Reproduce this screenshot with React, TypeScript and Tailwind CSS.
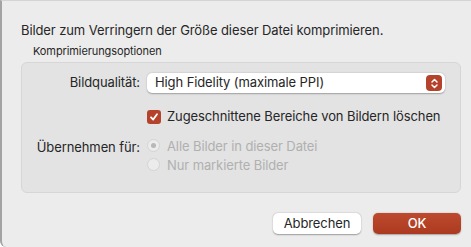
import React from "react";

export default function App() {
  return (
    <div
      className="w-[471px] h-[247px] bg-[#ececec] border-l-2 border-l-[#a3a3a3] border-t border-t-[#d4d4d4] rounded-bl-[6px] text-[#222] overflow-hidden tracking-[-0.1px]"
      style={{ fontFamily: "Inter, 'Noto Sans', sans-serif" }}
    >
      <div className="pl-[19px] pr-[10px]">
        <div className="pt-[21px] text-[13px] leading-[16px] text-[#262626]">
          Bilder zum Verringern der Größe dieser Datei komprimieren.
        </div>
        <div className="pl-[12px] mt-[6px] text-[11px] leading-[14px] text-[#262626]">
          Komprimierungsoptionen
        </div>
        <div className="mt-[4px] w-[440px] h-[131px] rounded-[6px] bg-[#e3e3e3] border border-[#d6d6d6] pt-[10px]">
          <div className="flex items-center">
            <div className="w-[118px] text-right text-[13px] text-[#262626]">Bildqualität:</div>
            <div className="ml-[7px] w-[298px] h-[20px] bg-white rounded-[5px] shadow-[0_0.5px_1.5px_rgba(0,0,0,0.3)] flex items-center pl-[8px] pr-[3px]">
              <span className="flex-1 text-[13px] text-[#262626]">High Fidelity (maximale PPI)</span>
              <div className="w-[16px] h-[16px] rounded-[4px] bg-[#b5432b] flex items-center justify-center">
                <svg width="9" height="11" viewBox="0 0 9 11" fill="none" stroke="white" strokeWidth="1.5" strokeLinecap="round" strokeLinejoin="round">
                  <path d="M2 4 L4.5 1.5 L7 4" />
                  <path d="M2 7 L4.5 9.5 L7 7" />
                </svg>
              </div>
            </div>
          </div>
          <div className="flex items-center mt-[14px] ml-[125px]">
            <div className="w-[14px] h-[14px] rounded-[3px] bg-[#b5432b] flex items-center justify-center">
              <svg width="10" height="10" viewBox="0 0 10 10" fill="none" stroke="white" strokeWidth="1.8" strokeLinecap="round" strokeLinejoin="round">
                <path d="M2 5.3 L4.2 7.6 L8 2.2" />
              </svg>
            </div>
            <span className="ml-[6px] text-[13px] text-[#262626]">Zugeschnittene Bereiche von Bildern löschen</span>
          </div>
          <div className="flex mt-[11px]">
            <div className="w-[118px] text-right text-[13px] text-[#262626] leading-[16px] pt-[1px]">Übernehmen für:</div>
            <div className="ml-[7px] flex flex-col gap-[3px]">
              <div className="flex items-center h-[16px]">
                <div className="w-[13px] h-[13px] rounded-full bg-[#ececec] border border-[#d4d4d4] flex items-center justify-center">
                  <div className="w-[5px] h-[5px] rounded-full bg-[#b8b8b8]" />
                </div>
                <span className="ml-[7px] text-[13px] leading-[16px] text-[#b0b0b0]">Alle Bilder in dieser Datei</span>
              </div>
              <div className="flex items-center h-[16px]">
                <div className="w-[13px] h-[13px] rounded-full bg-[#ececec] border border-[#d4d4d4]" />
                <span className="ml-[7px] text-[13px] leading-[16px] text-[#b0b0b0]">Nur markierte Bilder</span>
              </div>
            </div>
          </div>
        </div>
        <div className="flex justify-end mt-[20px] gap-[12px] w-[440px]">
          <button className="w-[88px] h-[21px] bg-white rounded-[5px] shadow-[0_0.5px_1.5px_rgba(0,0,0,0.35)] text-[13px] text-[#262626]">
            Abbrechen
          </button>
          <button className="w-[88px] h-[21px] rounded-[5px] bg-gradient-to-b from-[#bd4a2e] to-[#ac3a20] shadow-[0_0.5px_1.5px_rgba(0,0,0,0.3)] text-[13px] font-medium text-white">
            OK
          </button>
        </div>
      </div>
    </div>
  );
}
